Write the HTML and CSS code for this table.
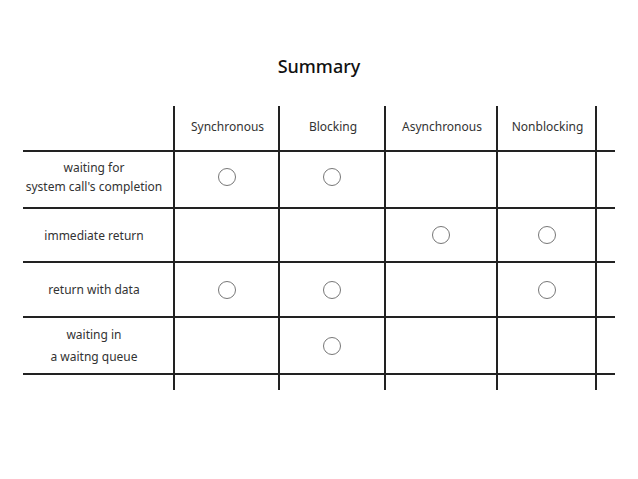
FILE: index.html
```html
<!DOCTYPE html>
<html>
<head>
<meta charset="utf-8">
<link rel="stylesheet" href="styles.css">
</head>
<body>
<div class="page">
  <h1 class="title">Summary</h1>
  <div class="grid">
    <div class="cell"></div>
    <div class="cell head">Synchronous</div>
    <div class="cell head">Blocking</div>
    <div class="cell head">Asynchronous</div>
    <div class="cell head">Nonblocking</div>
    <div class="cell edge"></div>

    <div class="cell label first">waiting for<br>system call's completion</div>
    <div class="cell first"><span class="mark"></span></div>
    <div class="cell first"><span class="mark"></span></div>
    <div class="cell"></div>
    <div class="cell"></div>
    <div class="cell edge"></div>

    <div class="cell label">immediate return</div>
    <div class="cell"></div>
    <div class="cell"></div>
    <div class="cell"><span class="mark"></span></div>
    <div class="cell"><span class="mark"></span></div>
    <div class="cell edge"></div>

    <div class="cell label">return with data</div>
    <div class="cell"><span class="mark"></span></div>
    <div class="cell"><span class="mark"></span></div>
    <div class="cell"></div>
    <div class="cell"><span class="mark"></span></div>
    <div class="cell edge"></div>

    <div class="cell label tall">waiting in<br>a waitng queue</div>
    <div class="cell"></div>
    <div class="cell"><span class="mark"></span></div>
    <div class="cell"></div>
    <div class="cell"></div>
    <div class="cell edge"></div>

    <div class="cell tail"></div>
    <div class="cell tail"></div>
    <div class="cell tail"></div>
    <div class="cell tail"></div>
    <div class="cell tail"></div>
    <div class="cell tail edge"></div>
  </div>
</div>
</body>
</html>
```

FILE: styles.css
```css
html, body {
  margin: 0;
  padding: 0;
  background: #fff;
}
.page {
  width: 638px;
  height: 479px;
  font-family: "Noto Sans", "Open Sans", sans-serif;
  color: #333;
}
.title {
  margin: 0;
  padding-top: 53px;
  height: 53px;
  box-sizing: content-box;
  text-align: center;
  font-size: 18px;
  font-weight: 500;
  line-height: 26px;
  color: #111;
}
.grid {
  margin-left: 23px;
  display: grid;
  grid-template-columns: 152px 105px 106px 112px 99px 18px;
  grid-template-rows: 46px 57px 54px 55px 57px 15px;
  width: 592px;
}
.cell {
  border-right: 2px solid #222;
  border-bottom: 2px solid #222;
  display: flex;
  align-items: center;
  justify-content: center;
  text-align: center;
  font-size: 12px;
  line-height: 19px;
  color: #333;
  white-space: nowrap;
}
.head {
  padding-bottom: 4px;
  padding-left: 2px;
}
.label {
  padding-right: 8px;
}
.first {
  padding-bottom: 5px;
}
.tall {
  line-height: 22px;
}
.edge {
  border-right: none;
}
.tail {
  border-bottom: none;
}
.mark {
  border: 1.3px solid #777;
  border-radius: 50%;
  box-sizing: border-box;
  width: 18px;
  height: 18px;
}
```
